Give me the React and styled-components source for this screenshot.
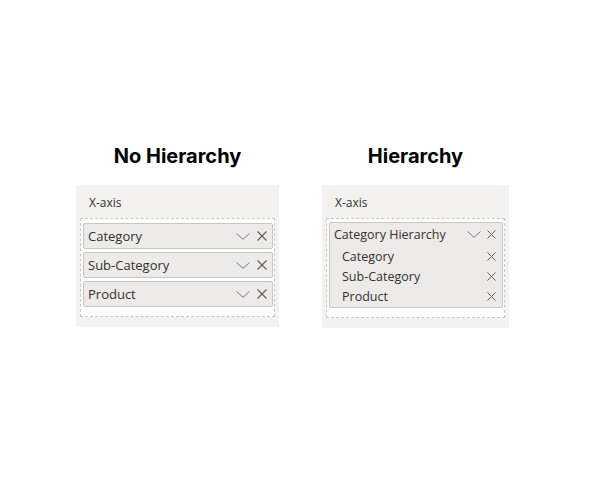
import React from "react";
import styled, { createGlobalStyle } from "styled-components";

const GlobalStyle = createGlobalStyle`
  body {
    margin: 0;
    background: #ffffff;
  }
`;

const fields = ["Category", "Sub-Category", "Product"];

const Chevron = () => (
  <svg width="14" height="7" viewBox="0 0 14 7">
    <polyline points="0.5,0.5 7,6.3 13.5,0.5" fill="none" stroke="#6b7a8c" strokeWidth="1" />
  </svg>
);

const Cross = ({ size = 10 }) => (
  <svg width={size} height={size} viewBox="0 0 10 10">
    <line x1="0.5" y1="0.5" x2="9.5" y2="9.5" stroke="#5f5d5b" strokeWidth="1.1" />
    <line x1="9.5" y1="0.5" x2="0.5" y2="9.5" stroke="#5f5d5b" strokeWidth="1.1" />
  </svg>
);

const App = () => {
  return (
    <Page>
      <GlobalStyle />
      <Column $width={203}>
        <Title>No Hierarchy</Title>
        <Panel>
          <AxisLabel>X-axis</AxisLabel>
          <Well $pad="4px 1px 9px 2px">
            {fields.map((f) => (
              <FieldRow key={f}>
                <span>{f}</span>
                <Icons>
                  <Chevron />
                  <Cross />
                </Icons>
              </FieldRow>
            ))}
          </Well>
        </Panel>
      </Column>

      <Column $width={187}>
        <Title>Hierarchy</Title>
        <Panel>
          <AxisLabel>X-axis</AxisLabel>
          <Well $pad="3px 1px 9px 2px">
            <HierarchyBox>
              <HierarchyHead>
                <span>Category Hierarchy</span>
                <Icons $gap={6}>
                  <Chevron />
                  <Cross size={9} />
                </Icons>
              </HierarchyHead>
              {fields.map((f) => (
                <ChildRow key={f}>
                  <span>{f}</span>
                  <Cross size={9} />
                </ChildRow>
              ))}
            </HierarchyBox>
          </Well>
        </Panel>
      </Column>
    </Page>
  );
};

export default App;

const Page = styled.div`
  width: 600px;
  height: 500px;
  box-sizing: border-box;
  padding: 144px 0 0 76px;
  display: flex;
  align-items: flex-start;
  gap: 43px;
`;

const Column = styled.div`
  width: ${(p) => p.$width}px;
  display: flex;
  flex-direction: column;
  align-items: stretch;
`;

const Title = styled.h2`
  margin: 0 0 17px;
  font-family: Inter, "Liberation Sans", sans-serif;
  font-weight: 700;
  font-size: 20px;
  line-height: 24px;
  color: #000000;
  text-align: center;
`;

const Panel = styled.div`
  background: #f3f2f1;
  padding: 10px 4px 10px 4px;
  display: flex;
  flex-direction: column;
`;

const AxisLabel = styled.div`
  font-family: "Open Sans", "Noto Sans", sans-serif;
  font-size: 12px;
  line-height: 16px;
  color: #323130;
  padding-left: 9px;
  margin-bottom: 7px;
`;

const Well = styled.div`
  background: #ffffff;
  border: 1px dashed #c8c6c4;
  padding: ${(p) => p.$pad};
  display: flex;
  flex-direction: column;
  gap: 3px;
`;

const FieldRow = styled.div`
  height: 26px;
  box-sizing: border-box;
  background: #edebe9;
  border: 1px solid #c8c6c4;
  border-radius: 2px;
  padding: 0 5px 0 4px;
  display: flex;
  align-items: center;
  justify-content: space-between;
  font-family: "Open Sans", "Noto Sans", sans-serif;
  font-size: 13px;
  color: #323130;
`;

const Icons = styled.div`
  display: flex;
  align-items: center;
  gap: ${(p) => p.$gap ?? 7}px;
`;

const HierarchyBox = styled.div`
  background: #edebe9;
  border: 1px solid #c8c6c4;
  border-radius: 2px;
  padding-bottom: 1px;
  display: flex;
  flex-direction: column;
  font-family: "Open Sans", "Noto Sans", sans-serif;
  color: #323130;
`;

const HierarchyHead = styled.div`
  height: 23px;
  padding: 0 6px 0 4px;
  display: flex;
  align-items: center;
  justify-content: space-between;
  font-size: 12.5px;
`;

const ChildRow = styled.div`
  height: 20px;
  padding: 0 6px 0 12px;
  display: flex;
  align-items: center;
  justify-content: space-between;
  font-size: 12.5px;
`;
